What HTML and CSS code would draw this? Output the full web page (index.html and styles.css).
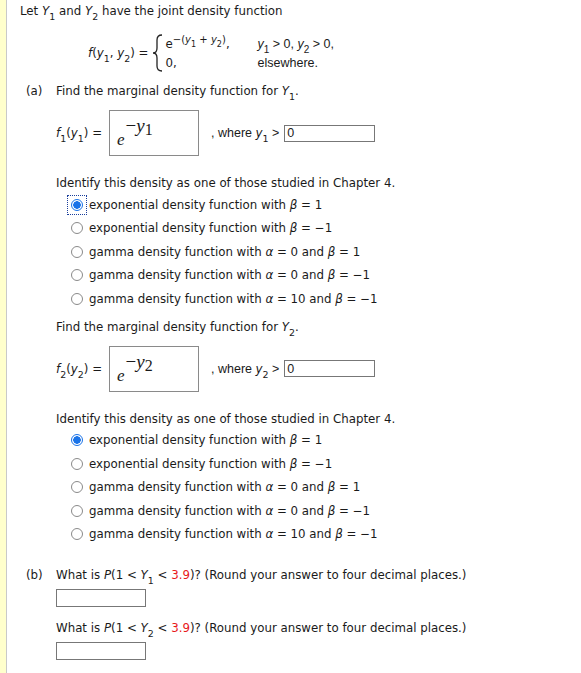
FILE: index.html
```html
<!DOCTYPE html>
<html lang="en">

<head>
    <meta charset="UTF-8">
    <title>Joint density</title>
    <link rel="stylesheet" href="styles.css">
</head>

<body>
    <div class="page">
        <p class="intro">Let <i>Y</i><sub>1</sub> and <i>Y</i><sub>2</sub> have the joint density function</p>

        <div class="joint">
            <span class="joint-label"><i>f</i>(<i>y</i><sub>1</sub>, <i>y</i><sub>2</sub>) =</span>
            <svg class="brace" width="12" height="38" viewBox="0 0 12 38">
                <path d="M10 1 Q5 1 5 6 L5 14 Q5 19 1 19 Q5 19 5 24 L5 32 Q5 37 10 37" fill="none" stroke="#222" stroke-width="1.3"/>
            </svg>
            <div class="cases">
                <span>e<sup>&minus;(<i>y</i><sub>1</sub> + <i>y</i><sub>2</sub>)</sup>,</span>
                <span class="arial"><i>y</i><sub>1</sub> &gt; 0, <i>y</i><sub>2</sub> &gt; 0,</span>
                <span>0,</span>
                <span class="arial">elsewhere.</span>
            </div>
        </div>

        <div class="part">
            <span class="part-tag">(a)</span>
            <div class="part-body">
                <p class="line">Find the marginal density function for <i>Y</i><sub>1</sub>.</p>

                <div class="answer-row">
                    <span class="answer-label"><i>f</i><sub>1</sub>(<i>y</i><sub>1</sub>) =</span>
                    <div class="math-box"><span class="m-e">e</span><span class="m-sup">&minus;<span class="m-y">y</span><span class="m-sub">1</span></span></div>
                    <span class="where">, where <i>y</i><sub>1</sub> &gt;</span>
                    <input class="short-input" type="text" value="0">
                </div>

                <p class="line identify">Identify this density as one of those studied in Chapter 4.</p>
                <div class="choices">
                    <label class="choice"><span class="focus"><input type="radio" name="d1" checked></span><span>exponential density function with <i>&beta;</i>&nbsp;= 1</span></label>
                    <label class="choice"><span class="focus off"><input type="radio" name="d1"></span><span>exponential density function with <i>&beta;</i>&nbsp;= &minus;1</span></label>
                    <label class="choice"><span class="focus off"><input type="radio" name="d1"></span><span>gamma density function with <i>&alpha;</i>&nbsp;= 0 and <i>&beta;</i>&nbsp;= 1</span></label>
                    <label class="choice"><span class="focus off"><input type="radio" name="d1"></span><span>gamma density function with <i>&alpha;</i>&nbsp;= 0 and <i>&beta;</i>&nbsp;= &minus;1</span></label>
                    <label class="choice"><span class="focus off"><input type="radio" name="d1"></span><span>gamma density function with <i>&alpha;</i>&nbsp;= 10 and <i>&beta;</i>&nbsp;= &minus;1</span></label>
                </div>

                <p class="line second">Find the marginal density function for <i>Y</i><sub>2</sub>.</p>

                <div class="answer-row">
                    <span class="answer-label"><i>f</i><sub>2</sub>(<i>y</i><sub>2</sub>) =</span>
                    <div class="math-box"><span class="m-e">e</span><span class="m-sup">&minus;<span class="m-y">y</span><span class="m-sub">2</span></span></div>
                    <span class="where">, where <i>y</i><sub>2</sub> &gt;</span>
                    <input class="short-input" type="text" value="0">
                </div>

                <p class="line identify">Identify this density as one of those studied in Chapter 4.</p>
                <div class="choices">
                    <label class="choice"><span class="focus off"><input type="radio" name="d2" checked></span><span>exponential density function with <i>&beta;</i>&nbsp;= 1</span></label>
                    <label class="choice"><span class="focus off"><input type="radio" name="d2"></span><span>exponential density function with <i>&beta;</i>&nbsp;= &minus;1</span></label>
                    <label class="choice"><span class="focus off"><input type="radio" name="d2"></span><span>gamma density function with <i>&alpha;</i>&nbsp;= 0 and <i>&beta;</i>&nbsp;= 1</span></label>
                    <label class="choice"><span class="focus off"><input type="radio" name="d2"></span><span>gamma density function with <i>&alpha;</i>&nbsp;= 0 and <i>&beta;</i>&nbsp;= &minus;1</span></label>
                    <label class="choice"><span class="focus off"><input type="radio" name="d2"></span><span>gamma density function with <i>&alpha;</i>&nbsp;= 10 and <i>&beta;</i>&nbsp;= &minus;1</span></label>
                </div>
            </div>
        </div>

        <div class="part part-b">
            <span class="part-tag">(b)</span>
            <div class="part-body">
                <p class="line">What is <i>P</i>(1 &lt; <i>Y</i><sub>1</sub> &lt; <span class="given">3.9</span>)? (Round your answer to four decimal places.)</p>
                <input class="long-input" type="text">
                <p class="line question">What is <i>P</i>(1 &lt; <i>Y</i><sub>2</sub> &lt; <span class="given">3.9</span>)? (Round your answer to four decimal places.)</p>
                <input class="long-input" type="text">
            </div>
        </div>
    </div>
</body>

</html>
```

FILE: styles.css
```css
* {
    margin: 0;
    padding: 0;
    box-sizing: border-box;
}

body {
    background: #ffffff;
    color: #1a1a1a;
    font-family: "DejaVu Sans", Verdana, sans-serif;
    font-size: 11.8px;
    line-height: 18px;
}

.page {
    min-height: 100vh;
    border-left: 6px solid #ffffcc;
    box-shadow: inset 1px 0 0 #c9c9c9;
    padding: 2px 0 0 14px;
}

sub {
    font-size: 0.8em;
    vertical-align: -0.5em;
    line-height: 0;
}

sup {
    font-size: 0.85em;
    vertical-align: 0.5em;
    line-height: 0;
}

.arial {
    font-family: "Liberation Sans", Arial, sans-serif;
    font-size: 12.5px;
}

/* joint density */
.joint {
    display: flex;
    align-items: center;
    margin: 14px 0 0 68px;
}

.joint-label {
    margin-right: 3px;
}

.brace {
    margin-right: 2px;
}

.cases {
    display: grid;
    grid-template-columns: 92px auto;
    row-gap: 1px;
}

/* parts */
.part {
    display: flex;
    margin-top: 10px;
}

.part-tag {
    width: 36px;
    padding-left: 6px;
}

.answer-row {
    display: flex;
    align-items: center;
    margin-top: 10px;
}

.answer-label {
    width: 53px;
}

.math-box {
    width: 90px;
    height: 46px;
    border: 1px solid #8a8a8a;
    padding: 6px 0 0 7px;
    font-family: "Liberation Serif", "DejaVu Serif", serif;
    font-size: 17px;
    line-height: 18px;
}

.m-e {
    font-style: italic;
}

.m-sup {
    display: inline-block;
    vertical-align: 13px;
    margin-left: 1px;
    font-size: 19px;
    line-height: 18px;
}

.m-y {
    font-style: italic;
}

.m-sub {
    font-size: 16px;
    vertical-align: -3px;
}

.where {
    font-family: "Liberation Sans", Arial, sans-serif;
    font-size: 12.5px;
    margin: 0 5px 0 12px;
}

.where i,
.where sub {
    font-family: "DejaVu Sans", Verdana, sans-serif;
    font-size: 11.8px;
}

.where sub {
    font-size: 9.5px;
}

.short-input {
    width: 91px;
    height: 17px;
    border: 1px solid #777;
    font-family: "Liberation Sans", Arial, sans-serif;
    font-size: 12.5px;
    padding: 0 2px;
    color: #222;
}

.identify {
    margin-top: 18px;
}

.choices {
    margin-top: 1px;
    padding-left: 11px;
}

.choice {
    display: flex;
    align-items: center;
    height: 23.5px;
    white-space: nowrap;
}

.focus {
    display: inline-flex;
    align-items: center;
    justify-content: center;
    width: 20px;
    height: 20px;
    border: 1px dotted #1b3f9c;
    margin-right: 2px;
}

.focus.off {
    border-color: transparent;
}

.choice input {
    appearance: none;
    width: 12px;
    height: 12px;
    border: 1px solid #8a8a8a;
    border-radius: 50%;
    background: #fff;
}

.choice input:checked {
    border-color: #1a73e8;
    background: radial-gradient(circle, #1a73e8 0 3.5px, #fff 4px);
}

.second {
    margin-top: 7px;
}

.part-b {
    margin-top: 20px;
}

.long-input {
    display: block;
    width: 90px;
    height: 18px;
    border: 1px solid #777;
    margin-top: 5px;
}

.question {
    margin-top: 12px;
}

.given {
    color: #e8191b;
}
```
